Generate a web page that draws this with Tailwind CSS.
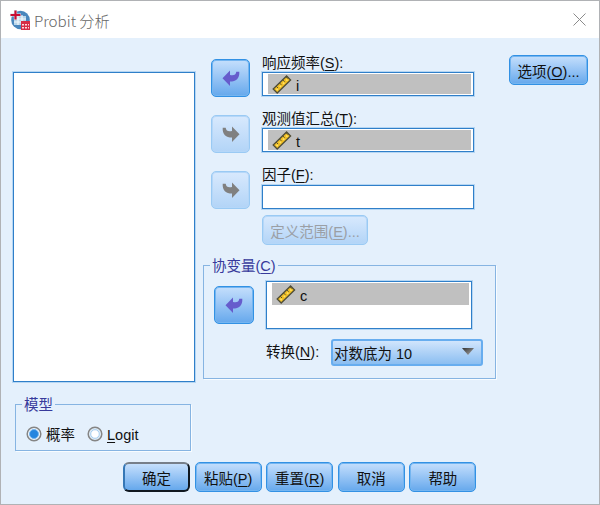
<!DOCTYPE html>
<html lang="zh-CN">
<head>
<meta charset="utf-8">
<title>Probit 分析</title>
<script src="https://cdn.jsdelivr.net/npm/@tailwindcss/browser@4"></script>
</head>
<body class="h-[505px] w-[600px] overflow-hidden font-['Liberation_Sans','Noto_Sans_CJK_SC',sans-serif] text-[14.5px] leading-[18px] text-[#111]">
<svg class="hidden">
  <defs>
    <symbol id="ruler" viewBox="0 0 20 20">
      <path d="M1.200 15 14.600 2 18.600 6 5.200 19Z" fill="#efbd22" stroke="#4f4d38" stroke-width="1.300"/>
      <path d="M4.200 12.200l1.800 1.800M7.500 9l1.800 1.800M10.800 5.900l1.800 1.800M14 2.800l1.800 1.800" stroke="#4f4d38" stroke-width="1"/>
      <path d="M4.500 14.800l1.300 1.300M7.700 11.700l1.300 1.300M11 8.600l1.300 1.300M14.200 5.500l1.300 1.300" stroke="#ffe36a" stroke-width="1.600"/>
    </symbol>
    <symbol id="arrow" viewBox="0 0 18 16">
      <path d="M.5 8.300 8 .4V5c3.600 1 6-.2 6.300-3.200L17.300 1.800C17.800 8.500 14 11.500 8 11.600V16Z"/>
    </symbol>
  </defs>
</svg>
<div class="flex h-full flex-col border border-[#b0b2b5] bg-[#e4f0fc]">
  <header class="flex h-[37px] shrink-0 items-center bg-white pl-[9px] pr-[13px]">
    <svg class="size-5 shrink-0" viewBox="0 0 20 20">
      <circle cx="10.500" cy="10" r="9.300" fill="#4a87bd"/>
      <path d="M4 6h12v9H4z" fill="#b9d5e9"/>
      <path d="M4 9h12M4 12h12M8 5v10M12 5v10" stroke="#f2f8fc" stroke-width="1.200"/>
      <path d="M5.500 0v10M0 5h11" stroke="#dbe6f0" stroke-width="3.200"/>
      <path d="M5.500 .5v9M.5 5h10" stroke="#c80c32" stroke-width="2.200"/>
      <path d="M11 11h9v9h-9z" fill="#d52d46"/>
      <path d="M12 14h2v1.500h-2zM15 14h2v1.500h-2zM18 14h1v1.500h-1zM12 17h2v1.500h-2zM15 17h2v1.500h-2zM18 17h1v1.500h-1z" fill="#ffd9df"/>
    </svg>
    <span class="ml-[4px] flex-1 whitespace-pre font-['Noto_Sans_CJK_SC',sans-serif] text-[15.200px] font-light text-[#666]">Probit 分析</span>
    <svg class="size-[13px]" viewBox="0 0 13 13"><path d="M.5.5l12 12M12.500.5l-12 12" stroke="#8b8b8b" stroke-width="1"/></svg>
  </header>

  <main class="flex h-[412px] shrink-0 pl-[11px]">
    <section class="w-[191px] shrink-0 pt-[33px]">
      <div class="h-[312px] w-[184px] border border-[#b5d6f3] bg-white shadow-[inset_0_0_0_1px_#2f7fc9]"></div>
      <fieldset class="ml-[3px] mt-[11px] h-[57px] w-[176px] border border-[#86b4e2] pl-[10px] shadow-[1px_1px_0_#f8fcff] [clip-path:inset(0_-2px_-2px_0)]">
        <legend class="-ml-[4px] px-[2px] leading-[20px] text-[#373a9b]"><span class="relative top-[1px]">模型</span></legend>
        <div class="flex items-center gap-[4px] pt-[10px]">
          <svg class="size-[16px]" viewBox="0 0 16 16"><circle cx="8" cy="8" r="6.800" fill="#eef7ff" stroke="#858585" stroke-width="1.500"/><circle cx="8" cy="8" r="4.500" fill="#2585df" stroke="#74b5ef"/></svg>
          <span class="mt-[2px]">概率</span>
          <svg class="ml-[8px] size-[16px]" viewBox="0 0 16 16"><circle cx="8" cy="8" r="6.800" fill="#deebf5" stroke="#858585" stroke-width="1.500"/><circle cx="8" cy="8" r="4.300" fill="#fff" stroke="#a4cdf0"/></svg>
          <span class="mt-[2px]"><u class="underline-offset-2">L</u>ogit</span>
        </div>
      </fieldset>
    </section>

    <section class="w-[306px] shrink-0 pt-[15px]">
      <div class="flex h-[56px] pl-[8px]">
        <button class="mt-[6px] flex h-[38px] w-[39px] items-center justify-center rounded-[5px] border border-[#3291e4] bg-linear-to-b from-[#c5dffc] to-[#65a8ec] shadow-[inset_0_0_0_1px_#74b5f0]"><svg class="h-[16px] w-[18px] fill-[#665ccc]"><use href="#arrow"/></svg></button>
        <div class="ml-[11px] w-[214px]"><div class="h-[18px] pl-[1px] pt-[1px]">响应频率(<u class="underline-offset-2">S</u>):</div>
          <div class="flex h-[26px] border border-[#b5d6f3] bg-white py-[2px] pl-[6px] pr-[3px] shadow-[inset_0_0_0_1px_#2f7fc9]"><div class="flex flex-1 items-center bg-[#c0c0c0] pl-[4px]"><svg class="size-[20px]"><use href="#ruler"/></svg><span class="ml-[4px] mt-[3px]">i</span></div></div></div>
      </div>
      <div class="flex h-[56px] pl-[8px]">
        <button class="mt-[6px] flex h-[38px] w-[39px] items-center justify-center rounded-[5px] border border-[#9acaf4] bg-linear-to-b from-[#d8e9fd] to-[#b2d4f7] shadow-[inset_0_0_0_1px_#b5d7f8]"><svg class="h-[16px] w-[18px] -scale-x-100 fill-[#808080]"><use href="#arrow"/></svg></button>
        <div class="ml-[11px] w-[214px]"><div class="h-[18px] pl-[1px] pt-[1px]">观测值汇总(<u class="underline-offset-2">T</u>):</div>
          <div class="flex h-[26px] border border-[#b5d6f3] bg-white py-[2px] pl-[6px] pr-[3px] shadow-[inset_0_0_0_1px_#2f7fc9]"><div class="flex flex-1 items-center bg-[#c0c0c0] pl-[4px]"><svg class="size-[20px]"><use href="#ruler"/></svg><span class="ml-[4px] mt-[3px]">t</span></div></div></div>
      </div>
      <div class="flex h-[50px] pl-[8px]">
        <button class="mt-[6px] flex h-[38px] w-[39px] items-center justify-center rounded-[5px] border border-[#9acaf4] bg-linear-to-b from-[#d8e9fd] to-[#b2d4f7] shadow-[inset_0_0_0_1px_#b5d7f8]"><svg class="h-[16px] w-[18px] -scale-x-100 fill-[#808080]"><use href="#arrow"/></svg></button>
        <div class="ml-[11px] w-[214px]"><div class="h-[18px] pl-[1px] pt-[1px]">因子(<u class="underline-offset-2">F</u>):</div>
          <div class="mt-[1px] h-[26px] border border-[#b5d6f3] bg-white shadow-[inset_0_0_0_1px_#2f7fc9]"></div></div>
      </div>
      <button class="ml-[59px] block h-[30px] w-[106px] rounded-[5px] border border-[#9acaf4] bg-linear-to-b from-[#d8e9fd] to-[#b2d4f7] pt-[3px] text-[#9b9fa5] shadow-[inset_0_0_0_1px_#b5d7f8]">定义范围(<u class="underline-offset-2">E</u>)...</button>
      <fieldset class="mt-[9px] h-[125px] w-[293px] border border-[#86b4e2] px-[10px] shadow-[1px_1px_0_#f8fcff] [clip-path:inset(0_-2px_-2px_0)]">
        <legend class="-ml-[4px] px-[2px] leading-[22px] text-[#373a9b]"><span class="relative top-[1px]">协变量(<u class="underline-offset-2">C</u>)</span></legend>
        <div class="flex pt-[4px]">
          <button class="mt-[6px] flex h-[38px] w-[40px] items-center justify-center rounded-[5px] border border-[#3291e4] bg-linear-to-b from-[#c5dffc] to-[#65a8ec] shadow-[inset_0_0_0_1px_#74b5f0]"><svg class="h-[16px] w-[18px] fill-[#665ccc]"><use href="#arrow"/></svg></button>
          <div class="ml-[11px] h-[50px] w-[208px] border border-[#b5d6f3] bg-white pl-[6px] pr-[3px] pt-[2px] shadow-[inset_0_0_0_1px_#2f7fc9]"><div class="flex h-[22px] items-center bg-[#c0c0c0] pl-[4px]"><svg class="size-[20px]"><use href="#ruler"/></svg><span class="ml-[4px] mt-[3px]">c</span></div></div>
        </div>
        <div class="mt-[9px] flex items-center pl-[52px]">
          <span class="-mt-[2px] w-[65px] whitespace-nowrap">转换(<u class="underline-offset-2">N</u>):</span>
          <div class="flex h-[27px] w-[152px] items-center rounded-[3px] border-2 border-[#67adef] bg-linear-to-b from-[#d1e5fc] to-[#8bbef1] pl-[1px] pr-[7px]"><span class="mt-[2px] flex-1 whitespace-nowrap">对数底为 10</span><svg class="-mt-[2px] h-[7px] w-[12px] shrink-0" viewBox="0 0 12 7"><linearGradient id="tri" x1="0" y1="0" x2="1" y2="1"><stop offset="0" stop-color="#333"/><stop offset="1" stop-color="#aaa"/></linearGradient><path d="M0 0h12L6 7Z" fill="url(#tri)"/></svg></div>
        </div>
      </fieldset>
    </section>

    <aside class="pt-[17px]">
      <button class="h-[30px] w-[79px] rounded-[5px] border border-[#3291e4] bg-linear-to-b from-[#c5dffc] to-[#65a8ec] pt-[3px] shadow-[inset_0_0_0_1px_#74b5f0]">选项(<u class="underline-offset-2">O</u>)...</button>
    </aside>
  </main>

  <footer class="flex gap-[4.600px] pl-[122px] pt-[12px]">
    <button class="h-[30px] w-[67px] rounded-[6px] border-2 border-[#101820] border-l-[#3577b6] border-t-[#777f89] bg-linear-to-b from-[#c5dffc] to-[#65a8ec] pt-[3px]">确定</button>
    <button class="h-[30px] w-[67px] rounded-[5px] border border-[#3291e4] bg-linear-to-b from-[#c5dffc] to-[#65a8ec] pt-[3px] shadow-[inset_0_0_0_1px_#74b5f0]">粘贴(<u class="underline-offset-2">P</u>)</button>
    <button class="h-[30px] w-[67px] rounded-[5px] border border-[#3291e4] bg-linear-to-b from-[#c5dffc] to-[#65a8ec] pt-[3px] shadow-[inset_0_0_0_1px_#74b5f0]">重置(<u class="underline-offset-2">R</u>)</button>
    <button class="h-[30px] w-[67px] rounded-[5px] border border-[#3291e4] bg-linear-to-b from-[#c5dffc] to-[#65a8ec] pt-[3px] shadow-[inset_0_0_0_1px_#74b5f0]">取消</button>
    <button class="h-[30px] w-[67px] rounded-[5px] border border-[#3291e4] bg-linear-to-b from-[#c5dffc] to-[#65a8ec] pt-[3px] shadow-[inset_0_0_0_1px_#74b5f0]">帮助</button>
  </footer>
</div>
</body>
</html>
